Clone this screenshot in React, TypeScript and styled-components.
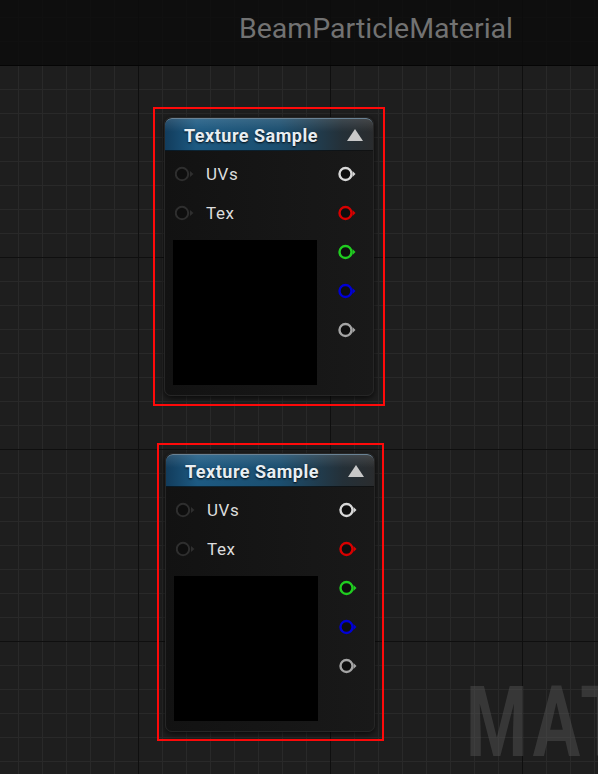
import React from 'react'
import styled, { createGlobalStyle } from 'styled-components'

const GlobalStyle = createGlobalStyle`
  html, body {
    margin: 0;
    padding: 0;
    background: #1d1d1d;
  }
  * {
    box-sizing: border-box;
  }
`

type PinColor = 'white' | 'red' | 'green' | 'blue' | 'gray'

const PIN_COLORS: Record<PinColor, string> = {
  white: '#d8d8d8',
  red: '#d80000',
  green: '#20cc20',
  blue: '#0000d4',
  gray: '#a4a4a4',
}

const InputPin = () => (
  <svg width="22" height="16" viewBox="0 0 22 16">
    <circle cx="7" cy="8" r="6.2" fill="#0e0e0e" stroke="#2e2e2e" strokeWidth="2" />
    <polygon points="15,5 18.5,8 15,11" fill="#2e2e2e" />
  </svg>
)

const OutputPin = ({ color }: { color: PinColor }) => (
  <svg width="22" height="16" viewBox="0 0 22 16">
    <circle cx="7.5" cy="8" r="6" fill="#0e0e0e" stroke={PIN_COLORS[color]} strokeWidth="2.4" />
    <polygon points="14.5,5 17.5,8 14.5,11" fill={PIN_COLORS[color]} />
  </svg>
)

const inputs = ['UVs', 'Tex']
const outputs: PinColor[] = ['white', 'red', 'green', 'blue', 'gray']

const TextureSampleNode = ({ left, top, pad }: { left: number; top: number; pad: [number, number, number, number] }) => (
  <Selection style={{ left, top, padding: `${pad[0]}px ${pad[1]}px ${pad[2]}px ${pad[3]}px` }}>
    <Node>
      <NodeHeader>
        <NodeTitle>Texture Sample</NodeTitle>
        <Collapse />
      </NodeHeader>
      <NodeBody>
        <InputColumn>
          {inputs.map((label) => (
            <PinRow key={label}>
              <InputPin />
              <PinLabel>{label}</PinLabel>
            </PinRow>
          ))}
          <Preview />
        </InputColumn>
        <OutputColumn>
          {outputs.map((c) => (
            <PinRow key={c}>
              <OutputPin color={c} />
            </PinRow>
          ))}
        </OutputColumn>
      </NodeBody>
    </Node>
  </Selection>
)

const App = () => {
  return (
    <>
      <GlobalStyle />
      <Root>
        <TitleBar>
          <GraphTitle>BeamParticleMaterial</GraphTitle>
        </TitleBar>
        <Graph>
          <TextureSampleNode left={153} top={41} pad={[8, 9, 8, 9]} />
          <TextureSampleNode left={157} top={377} pad={[8, 7, 7, 6]} />
          <Watermark>MATERIAL</Watermark>
        </Graph>
      </Root>
    </>
  )
}

const Root = styled.div`
  position: relative;
  width: 598px;
  height: 774px;
  overflow: hidden;
  display: flex;
  flex-direction: column;
  background-color: #1e1e1e;
  background-image:
    linear-gradient(to right, #0f0f0f 1px, transparent 1px),
    linear-gradient(to bottom, #0f0f0f 1px, transparent 1px),
    linear-gradient(to right, #292929 1px, transparent 1px),
    linear-gradient(to bottom, #292929 1px, transparent 1px);
  background-size: 192px 100%, 100% 192px, 24px 100%, 100% 24px;
  background-position: 138px 0, 0 65px, 18px 0, 0 17px;
  font-family: Roboto, 'Noto Sans', sans-serif;
`

const TitleBar = styled.div`
  height: 66px;
  flex: none;
  display: flex;
  align-items: center;
  justify-content: flex-end;
  padding-right: 85px;
  padding-bottom: 8px;
  background: rgba(12, 12, 12, 0.88);
  border-bottom: 1px solid #050505;
`

const GraphTitle = styled.div`
  font-size: 28.5px;
  font-weight: 400;
  color: #727272;
`

const Graph = styled.div`
  position: relative;
  flex: 1;
`

const Selection = styled.div`
  position: absolute;
  border: 2px solid #ff0a0a;
`

const Node = styled.div`
  width: 210px;
  border-radius: 7px;
  background: linear-gradient(to right, #121212, #191919);
  border: 1px solid #262626;
  box-shadow: 0 2px 6px rgba(0, 0, 0, 0.7);
  overflow: hidden;
  padding-bottom: 10px;
`

const NodeHeader = styled.div`
  height: 33px;
  display: flex;
  align-items: center;
  justify-content: space-between;
  padding: 0 10px 0 19px;
  background:
    linear-gradient(to bottom, rgba(255, 255, 255, 0.12), rgba(255, 255, 255, 0) 40%),
    linear-gradient(to right, #123c5c 0%, #1d5a82 15%, #1b4e6f 55%, #243038 85%, #2a2c2e 100%);
  border-top: 1px solid #6a8294;
  border-radius: 7px 7px 0 0;
  box-shadow: inset 0 -1px 0 rgba(0, 0, 0, 0.6);
`

const NodeTitle = styled.div`
  font-size: 18px;
  font-weight: 700;
  color: #e8eef2;
  letter-spacing: 0.5px;
  text-shadow: 0 1px 2px rgba(0, 0, 0, 0.9);
`

const Collapse = styled.div`
  width: 0;
  height: 0;
  border-left: 8.5px solid transparent;
  border-right: 8.5px solid transparent;
  border-bottom: 12px solid #c8c8c8;
  margin-top: -1px;
`

const NodeBody = styled.div`
  display: flex;
  justify-content: space-between;
  padding: 3px 8px 0 8px;
`

const InputColumn = styled.div`
  display: flex;
  flex-direction: column;
`

const OutputColumn = styled.div`
  display: flex;
  flex-direction: column;
  padding-right: 5px;
`

const PinRow = styled.div`
  height: 39px;
  display: flex;
  align-items: center;
  gap: 9px;
  padding-left: 2px;
`

const PinLabel = styled.span`
  font-size: 17px;
  color: #dcdcdc;
  letter-spacing: 0.6px;
`

const Preview = styled.div`
  width: 144px;
  height: 145px;
  margin-top: 8px;
  background: #000;
`

const Watermark = styled.div`
  position: absolute;
  left: 466px;
  top: 608px;
  font-size: 98px;
  font-weight: 700;
  color: rgba(90, 90, 90, 0.42);
  transform: scaleX(0.72);
  transform-origin: left top;
  white-space: nowrap;
  line-height: 1;
  letter-spacing: 6px;
`

export default App
